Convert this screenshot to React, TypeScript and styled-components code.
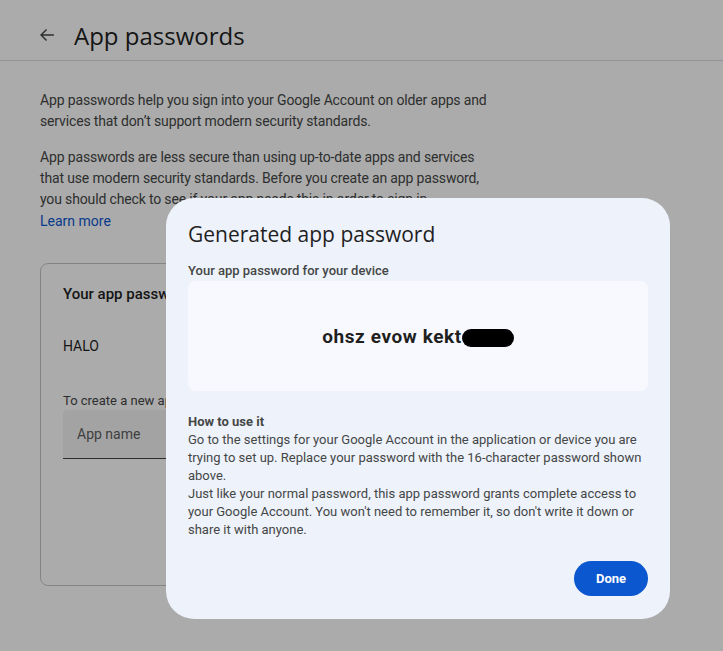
import React from 'react';
import styled, { createGlobalStyle } from 'styled-components';

const GlobalStyle = createGlobalStyle`
  html, body {
    margin: 0;
    padding: 0;
    background: #ffffff;
    font-family: Roboto, "Liberation Sans", Arial, sans-serif;
  }
  * { box-sizing: border-box; }
`;

const Page = styled.div`
  position: relative;
  width: 723px;
  height: 651px;
  overflow: hidden;
  background: #ffffff;
  color: #1f1f1f;
`;

const Header = styled.header`
  height: 61px;
  display: flex;
  align-items: center;
  gap: 16px;
  padding: 10px 0 0 36px;
  border-bottom: 1px solid #dadce0;
`;

const BackButton = styled.button`
  width: 22px;
  height: 22px;
  padding: 0;
  border: none;
  background: none;
  display: flex;
  align-items: center;
  justify-content: center;
  color: #444746;
`;

const Title = styled.h1`
  margin: 0;
  font-family: "Open Sans", Roboto, sans-serif;
  font-size: 24px;
  font-weight: 400;
  color: #1f1f1f;
`;

const Content = styled.main`
  padding: 29px 40px 0;
  width: 532px;
`;

const Para = styled.p`
  margin: 0 0 15px;
  font-size: 14px;
  line-height: 21px;
  letter-spacing: -0.15px;
  color: #444746;
`;

const LearnMore = styled.a`
  display: block;
  margin-top: -14px;
  font-size: 14px;
  line-height: 21px;
  color: #0b57d0;
  text-decoration: none;
`;

const Card = styled.section`
  margin-top: 31px;
  height: 323px;
  border: 1px solid #c4c7c5;
  border-radius: 8px;
  padding: 20px 22px;
`;

const CardTitle = styled.h2`
  margin: 0;
  font-size: 15px;
  font-weight: 500;
  line-height: 20px;
  color: #1f1f1f;
`;

const AppItem = styled.div`
  margin-top: 34px;
  font-size: 14px;
  line-height: 16px;
  color: #1f1f1f;
`;

const Hint = styled.div`
  margin-top: 39px;
  font-size: 13px;
  line-height: 15px;
  color: #444746;
`;

const Field = styled.div`
  margin-top: 2px;
  height: 49px;
  width: 300px;
  background: #f4f4f4;
  border-bottom: 1px solid #444746;
  border-radius: 4px 4px 0 0;
  display: flex;
  align-items: center;
  padding-left: 14px;
  font-size: 14px;
  color: #5e5e5e;
`;

const Scrim = styled.div`
  position: absolute;
  inset: 0;
  background: rgba(0, 0, 0, 0.33);
`;

const Dialog = styled.div`
  position: absolute;
  left: 166px;
  top: 198px;
  width: 504px;
  height: 421px;
  background: #eef2fb;
  border-radius: 28px;
  padding: 22px 22px 23px;
  display: flex;
  flex-direction: column;
`;

const DialogTitle = styled.h2`
  margin: 0;
  font-family: "Open Sans", Roboto, sans-serif;
  font-size: 21px;
  font-weight: 400;
  line-height: 28px;
  color: #1f1f1f;
`;

const Label = styled.div`
  margin-top: 15px;
  font-size: 13px;
  font-weight: 500;
  line-height: 16px;
  color: #444746;
`;

const PasswordBox = styled.div`
  margin-top: 2px;
  height: 110px;
  background: #f8f9fe;
  border-radius: 8px;
  display: flex;
  align-items: center;
  justify-content: center;
`;

const Password = styled.div`
  font-size: 19px;
  font-weight: 700;
  letter-spacing: 0.6px;
  color: #1f1f1f;
  display: flex;
  align-items: center;
`;

const Redaction = styled.span`
  display: inline-block;
  width: 52px;
  height: 18px;
  margin-top: 3px;
  background: #000;
  border-radius: 9px;
`;

const HowTitle = styled.div`
  margin-top: 22px;
  font-size: 13px;
  font-weight: 700;
  line-height: 18px;
  color: #444746;
`;

const HowText = styled.p`
  margin: 0;
  font-size: 13px;
  line-height: 18px;
  color: #444746;
`;

const Actions = styled.div`
  margin-top: auto;
  display: flex;
  justify-content: flex-end;
`;

const DoneButton = styled.button`
  width: 74px;
  height: 35px;
  border: none;
  border-radius: 18px;
  background: #0b57d0;
  color: #ffffff;
  font-family: Roboto, sans-serif;
  font-size: 13px;
  font-weight: 700;
  cursor: pointer;
`;

const App = () => {
  return (
    <Page>
      <GlobalStyle />
      <Header>
        <BackButton aria-label="Back">
          <svg width="22" height="22" viewBox="0 0 24 24" fill="none" stroke="currentColor" strokeWidth="1.6">
            <path d="M19.5 12H5.5M11.5 6l-6 6 6 6" />
          </svg>
        </BackButton>
        <Title>App passwords</Title>
      </Header>
      <Content>
        <Para>
          App passwords help you sign into your Google Account on older apps and services that
          don’t support modern security standards.
        </Para>
        <Para>
          App passwords are less secure than using up-to-date apps and services that use modern
          security standards. Before you create an app password, you should check to see if your
          app needs this in order to sign in.
        </Para>
        <LearnMore href="#">Learn more</LearnMore>
        <Card>
          <CardTitle>Your app passwords</CardTitle>
          <AppItem>HALO</AppItem>
          <Hint>To create a new app specific password, type a name for it below...</Hint>
          <Field>App name</Field>
        </Card>
      </Content>
      <Scrim />
      <Dialog role="dialog">
        <DialogTitle>Generated app password</DialogTitle>
        <Label>Your app password for your device</Label>
        <PasswordBox>
          <Password>
            ohsz evow kekt
            <Redaction />
          </Password>
        </PasswordBox>
        <HowTitle>How to use it</HowTitle>
        <HowText>
          Go to the settings for your Google Account in the application or device you are trying
          to set up. Replace your password with the 16-character password shown above.
        </HowText>
        <HowText>
          Just like your normal password, this app password grants complete access to your Google
          Account. You won't need to remember it, so don't write it down or share it with anyone.
        </HowText>
        <Actions>
          <DoneButton>Done</DoneButton>
        </Actions>
      </Dialog>
    </Page>
  );
};

export default App;
